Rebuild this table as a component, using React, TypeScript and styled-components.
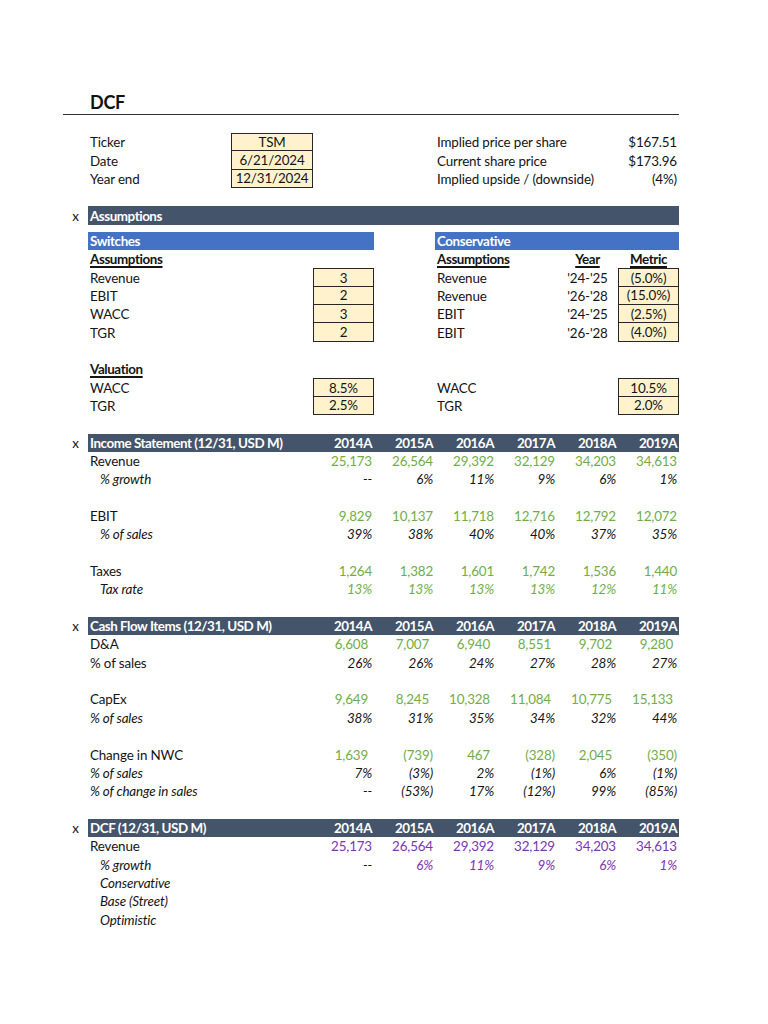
import React from 'react';
import styled, { createGlobalStyle } from 'styled-components';

const GlobalStyle = createGlobalStyle`
  html, body { margin: 0; padding: 0; background: #ffffff; }
  body { font-family: Lato, "Open Sans", Arial, sans-serif; color: #111; }
`;

const COLS = '25px 143px 82px repeat(6, 61px)';
const ROW_H = 18.35;

type Tone = 'ink' | 'green' | 'purple' | 'white';
const toneColor: Record<Tone, string> = {
  ink: '#141414',
  green: '#70AD47',
  purple: '#7A36B0',
  white: '#ffffff',
};

const Sheet = styled.div`
  width: 616px;
  margin-left: 63px;
  font-size: 13.4px;
  letter-spacing: -0.15px;
`;

const TitleRow = styled.div`
  display: grid;
  grid-template-columns: ${COLS};
  height: 114px;
  align-items: end;
  border-bottom: 1px solid #303030;
  margin-bottom: 18px;
`;

const Title = styled.div`
  grid-column: 2;
  padding-left: 2px;
  font-size: 18px;
  font-weight: 700;
  line-height: 24px;
  letter-spacing: -0.3px;
  color: #111;
`;

const Row = styled.div<{ $h?: number }>`
  display: grid;
  grid-template-columns: ${COLS};
  height: ${p => p.$h ?? ROW_H}px;
`;

interface CellProps {
  $col?: string;
  $align?: 'left' | 'right' | 'center';
  $tone?: Tone;
  $italic?: boolean;
  $bold?: boolean;
  $indent?: boolean;
  $under?: boolean;
  $pad?: boolean;
}

const Cell = styled.div<CellProps>`
  grid-column: ${p => p.$col ?? 'auto'};
  display: flex;
  align-items: center;
  justify-content: ${p => (p.$align === 'right' ? 'flex-end' : p.$align === 'center' ? 'center' : 'flex-start')};
  padding: 0 ${p => (p.$pad ? 6 : 2)}px 0 ${p => (p.$indent ? 12 : 2)}px;
  white-space: nowrap;
  color: ${p => toneColor[p.$tone ?? 'ink']};
  font-style: ${p => (p.$italic ? 'italic' : 'normal')};
  font-weight: ${p => (p.$bold ? 700 : 400)};
  letter-spacing: ${p => (p.$bold ? '-0.4px' : 'inherit')};
  text-decoration: ${p => (p.$under ? 'underline' : 'none')};
  text-decoration-thickness: 1.5px;
  text-underline-offset: 2px;
  min-width: 0;
`;

const Marker = styled(Cell)`
  grid-column: 1;
  justify-content: center;
  padding: 0;
`;

const InputBox = styled(Cell)<{ $first?: boolean }>`
  justify-content: center;
  background: #FFF2CC;
  border: 1px solid #262626;
  border-top-width: ${p => (p.$first ? 1 : 0)}px;
  box-sizing: border-box;
`;

const SubBar = styled(Cell)`
  background: #4472C4;
  color: #ffffff;
  font-weight: 700;
  letter-spacing: -0.4px;
`;

const HeaderBar = styled.div`
  grid-column: 2 / -1;
  display: grid;
  grid-template-columns: 225px repeat(6, 61px);
  background: #44546A;
  color: #ffffff;
  font-weight: 700;
  letter-spacing: -0.45px;
`;

const HeaderCell = styled.div<{ $align?: 'left' | 'right' }>`
  display: flex;
  align-items: center;
  justify-content: ${p => (p.$align === 'right' ? 'flex-end' : 'flex-start')};
  padding: 0 2px;
  white-space: nowrap;
`;

const YEARS = ['2014A', '2015A', '2016A', '2017A', '2018A', '2019A'];

const SectionHeader: React.FC<{ title: string; years?: boolean }> = ({ title, years }) => (
  <Row>
    <Marker>x</Marker>
    <HeaderBar>
      <HeaderCell>{title}</HeaderCell>
      {years && YEARS.map(y => <HeaderCell key={y} $align="right">{y}</HeaderCell>)}
    </HeaderBar>
  </Row>
);

interface DataRowProps {
  label: string;
  values?: string[];
  tone?: Tone;
  italic?: boolean;
  labelItalic?: boolean;
  indent?: boolean;
  pad?: boolean;
}

const DataRow: React.FC<DataRowProps> = ({ label, values, tone = 'ink', italic, labelItalic, indent, pad }) => (
  <Row>
    <Cell $col="2 / 4" $italic={labelItalic} $indent={indent}>{label}</Cell>
    {values &&
      values.map((v, i) => (
        <Cell
          key={i}
          $col={String(4 + i)}
          $align="right"
          $tone={v === '--' ? 'ink' : tone}
          $italic={italic}
          $pad={pad && !v.startsWith('(')}
        >
          {v}
        </Cell>
      ))}
  </Row>
);

const Blank: React.FC = () => <Row />;

const topRows = [
  { label: 'Ticker', box: 'TSM', rLabel: 'Implied price per share', rValue: '$167.51' },
  { label: 'Date', box: '6/21/2024', rLabel: 'Current share price', rValue: '$173.96' },
  { label: 'Year end', box: '12/31/2024', rLabel: 'Implied upside / (downside)', rValue: '(4%)' },
];

const switchRows = [
  { label: 'Revenue', sw: '3', rLabel: 'Revenue', year: "'24-'25", metric: '(5.0%)' },
  { label: 'EBIT', sw: '2', rLabel: 'Revenue', year: "'26-'28", metric: '(15.0%)' },
  { label: 'WACC', sw: '3', rLabel: 'EBIT', year: "'24-'25", metric: '(2.5%)' },
  { label: 'TGR', sw: '2', rLabel: 'EBIT', year: "'26-'28", metric: '(4.0%)' },
];

const valuationRows = [
  { label: 'WACC', v: '8.5%', rLabel: 'WACC', rv: '10.5%' },
  { label: 'TGR', v: '2.5%', rLabel: 'TGR', rv: '2.0%' },
];

export default function App() {
  return (
    <>
      <GlobalStyle />
      <Sheet>
        <TitleRow>
          <Title>DCF</Title>
        </TitleRow>

        {topRows.map((r, i) => (
          <Row key={r.label}>
            <Cell $col="2">{r.label}</Cell>
            <InputBox $col="3" $first={i === 0}>{r.box}</InputBox>
            <Cell $col="6 / 9">{r.rLabel}</Cell>
            <Cell $col="9" $align="right">{r.rValue}</Cell>
          </Row>
        ))}
        <Blank />

        <SectionHeader title="Assumptions" />
        <Row $h={7} />
        <Row>
          <SubBar $col="2 / 5">Switches</SubBar>
          <SubBar $col="6 / 10">Conservative</SubBar>
        </Row>
        <Row>
          <Cell $col="2" $bold $under>Assumptions</Cell>
          <Cell $col="6 / 8" $bold $under>Assumptions</Cell>
          <Cell $col="8" $align="center" $bold $under>Year</Cell>
          <Cell $col="9" $align="center" $bold $under>Metric</Cell>
        </Row>
        {switchRows.map((r, i) => (
          <Row key={i}>
            <Cell $col="2">{r.label}</Cell>
            <InputBox $col="4" $first={i === 0}>{r.sw}</InputBox>
            <Cell $col="6 / 8">{r.rLabel}</Cell>
            <Cell $col="8" $align="center">{r.year}</Cell>
            <InputBox $col="9" $first={i === 0}>{r.metric}</InputBox>
          </Row>
        ))}
        <Blank />
        <Row>
          <Cell $col="2" $bold $under>Valuation</Cell>
        </Row>
        {valuationRows.map((r, i) => (
          <Row key={i}>
            <Cell $col="2">{r.label}</Cell>
            <InputBox $col="4" $first={i === 0}>{r.v}</InputBox>
            <Cell $col="6 / 8">{r.rLabel}</Cell>
            <InputBox $col="9" $first={i === 0}>{r.rv}</InputBox>
          </Row>
        ))}
        <Blank />

        <SectionHeader title="Income Statement (12/31, USD M)" years />
        <DataRow label="Revenue" tone="green" values={['25,173', '26,564', '29,392', '32,129', '34,203', '34,613']} />
        <DataRow label="% growth" labelItalic indent italic values={['--', '6%', '11%', '9%', '6%', '1%']} />
        <Blank />
        <DataRow label="EBIT" tone="green" values={['9,829', '10,137', '11,718', '12,716', '12,792', '12,072']} />
        <DataRow label="% of sales" labelItalic indent italic values={['39%', '38%', '40%', '40%', '37%', '35%']} />
        <Blank />
        <DataRow label="Taxes" tone="green" values={['1,264', '1,382', '1,601', '1,742', '1,536', '1,440']} />
        <DataRow label="Tax rate" labelItalic indent italic tone="green" values={['13%', '13%', '13%', '13%', '12%', '11%']} />
        <Blank />

        <SectionHeader title="Cash Flow Items (12/31, USD M)" years />
        <DataRow label="D&A" tone="green" pad values={['6,608', '7,007', '6,940', '8,551', '9,702', '9,280']} />
        <DataRow label="% of sales" italic values={['26%', '26%', '24%', '27%', '28%', '27%']} />
        <Blank />
        <DataRow label="CapEx" tone="green" pad values={['9,649', '8,245', '10,328', '11,084', '10,775', '15,133']} />
        <DataRow label="% of sales" labelItalic italic values={['38%', '31%', '35%', '34%', '32%', '44%']} />
        <Blank />
        <DataRow label="Change in NWC" tone="green" pad values={['1,639', '(739)', '467', '(328)', '2,045', '(350)']} />
        <DataRow label="% of sales" labelItalic italic values={['7%', '(3%)', '2%', '(1%)', '6%', '(1%)']} />
        <DataRow label="% of change in sales" labelItalic italic values={['--', '(53%)', '17%', '(12%)', '99%', '(85%)']} />
        <Blank />

        <SectionHeader title="DCF (12/31, USD M)" years />
        <DataRow label="Revenue" tone="purple" values={['25,173', '26,564', '29,392', '32,129', '34,203', '34,613']} />
        <DataRow label="% growth" labelItalic indent italic tone="purple" values={['--', '6%', '11%', '9%', '6%', '1%']} />
        <DataRow label="Conservative" labelItalic indent />
        <DataRow label="Base (Street)" labelItalic indent />
        <DataRow label="Optimistic" labelItalic indent />
      </Sheet>
    </>
  );
}
